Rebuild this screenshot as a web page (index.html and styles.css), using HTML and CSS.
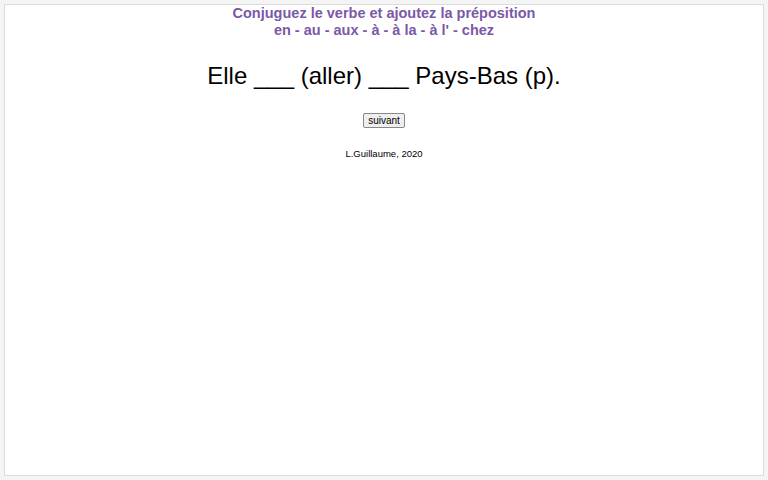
FILE: index.html
```html
<!DOCTYPE html>
<html lang="fr">
<head>
<meta charset="utf-8">
<link rel="stylesheet" href="styles.css">
</head>
<body>
<div class="page">
  <div class="title">Conjuguez le verbe et ajoutez la préposition<br>en - au - aux - à - à la - à l' - chez</div>
  <div class="sentence">Elle ___ (aller) ___ Pays-Bas (p).</div>
  <div class="actions"><button class="btn">suivant</button></div>
  <div class="credit">L.Guillaume, 2020</div>
</div>
</body>
</html>
```
FILE: styles.css
```css
html, body { margin: 0; padding: 0; }
body {
  background: #f4f4f4;
  padding: 4px;
  font-family: "Liberation Sans", Arial, sans-serif;
}
.page {
  background: #fff;
  border: 1px solid #dcdcdc;
  box-sizing: border-box;
  height: 472px;
  width: 760px;
  text-align: center;
}
.title {
  color: #7b58a8;
  font-weight: bold;
  font-size: 14.5px;
  line-height: 17px;
}
.sentence {
  font-size: 24px;
  line-height: 28px;
  margin-top: 23px;
  color: #000;
}
.actions { margin-top: 20px; }
.btn {
  font-family: "Liberation Sans", Arial, sans-serif;
  font-size: 10px;
  padding: 1px 4px;
  border: 1px solid #888;
  border-radius: 2px;
  background: #efefef;
  color: #000;
}
.credit {
  font-size: 9.5px;
  margin-top: 20px;
  color: #000;
}
```
